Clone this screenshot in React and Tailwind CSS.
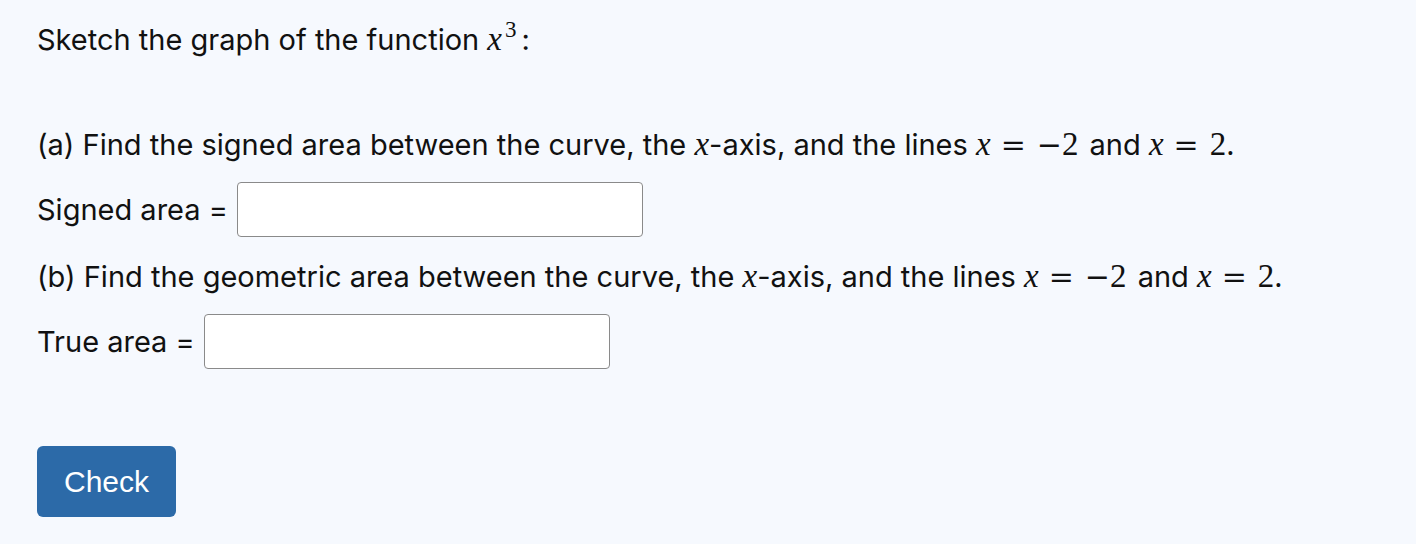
import React from "react";

const Op = ({ children }) => (
  <span className="font-['DejaVu_Serif',serif] text-[30px] leading-none not-italic">{children}</span>
);

const Eq = ({ value }) => (
  <span className="font-['Liberation_Serif',serif] text-[33px] leading-none mr-[3px]">
    <span className="italic">x</span>
    <span className="inline-block ml-[10px] mr-[11px]">
      <Op>=</Op>
    </span>
    {value}
  </span>
);

const X = () => (
  <span className="font-['Liberation_Serif',serif] italic text-[33px] leading-none">x</span>
);

const App = () => {
  return (
    <div className="w-[1416px] h-[544px] bg-[#f6f9fe] text-[#111] font-['Inter',sans-serif] text-[29px] px-[37px] pt-[20px]">
      <p className="h-[40px] leading-[40px]">
        Sketch the graph of the function{" "}
        <span className="font-['Liberation_Serif',serif] text-[33px] leading-none">
          <span className="italic">x</span>
          <span className="text-[23px] relative -top-[13px] ml-[3px]">3</span>
        </span>
        <span className="ml-[5px]">:</span>
      </p>

      <p className="mt-[65px] h-[40px] leading-[40px]">
        (a) Find the signed area between the curve, the <X />-axis, and the lines{" "}
        <Eq value={<><Op>{"\u2212"}</Op>2</>} /> and <Eq value="2." />
      </p>

      <div className="mt-[17px] flex items-center h-[55px]">
        <span>Signed area =</span>
        <input className="ml-[9px] w-[406px] h-[55px] bg-white border border-[#8a8a8a] rounded-[4px]" />
      </div>

      <p className="mt-[20px] h-[40px] leading-[40px]">
        (b) Find the geometric area between the curve, the <X />-axis, and the lines{" "}
        <Eq value={<><Op>{"\u2212"}</Op>2</>} /> and <Eq value="2." />
      </p>

      <div className="mt-[17px] flex items-center h-[55px]">
        <span>True area =</span>
        <input className="ml-[9px] w-[406px] h-[55px] bg-white border border-[#8a8a8a] rounded-[4px]" />
      </div>

      <button className="mt-[77px] w-[139px] h-[71px] bg-[#2c6aa8] text-white rounded-[6px] font-['Liberation_Sans',sans-serif] text-[30px]">
        Check
      </button>
    </div>
  );
};

export default App;
